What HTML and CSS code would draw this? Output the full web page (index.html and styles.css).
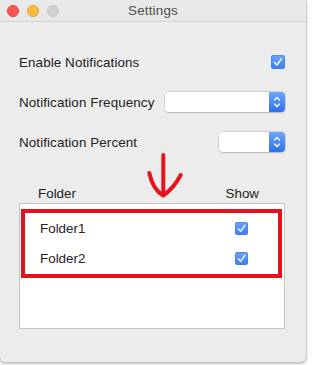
FILE: index.html
```html
<!DOCTYPE html>
<html>
<head>
<meta charset="utf-8">
<link rel="stylesheet" href="styles.css">
</head>
<body>
<div class="window">
  <div class="titlebar">
    <div class="lights">
      <span class="light red"></span>
      <span class="light yellow"></span>
      <span class="light gray"></span>
    </div>
    <div class="title">Settings</div>
  </div>
  <div class="content">
    <div class="row">
      <span class="label">Enable Notifications</span>
      <span class="check"><svg viewBox="0 0 14 14" width="14" height="14"><path d="M3.6 7.4 L6 10 L10.6 3.6" fill="none" stroke="#fff" stroke-width="1.5" stroke-linecap="round" stroke-linejoin="round"/></svg></span>
    </div>
    <div class="row">
      <span class="label">Notification Frequency</span>
      <span class="popup wide"><span class="field"></span><span class="stepper"><svg viewBox="0 0 16 20" width="16" height="20"><path d="M5.5 8 L8 5.5 L10.5 8 M5.5 12 L8 14.5 L10.5 12" fill="none" stroke="#fff" stroke-width="1.3" stroke-linecap="round" stroke-linejoin="round"/></svg></span></span>
    </div>
    <div class="row">
      <span class="label">Notification Percent</span>
      <span class="popup narrow"><span class="field"></span><span class="stepper"><svg viewBox="0 0 16 20" width="16" height="20"><path d="M5.5 8 L8 5.5 L10.5 8 M5.5 12 L8 14.5 L10.5 12" fill="none" stroke="#fff" stroke-width="1.3" stroke-linecap="round" stroke-linejoin="round"/></svg></span></span>
    </div>
    <div class="header">
      <span class="col-folder">Folder</span>
      <span class="col-show">Show</span>
    </div>
    <div class="table">
      <div class="highlight">
        <div class="trow">
          <span class="name">Folder1</span>
          <span class="check small"><svg viewBox="0 0 14 14" width="13" height="13"><path d="M3.6 7.4 L6 10 L10.6 3.6" fill="none" stroke="#fff" stroke-width="1.5" stroke-linecap="round" stroke-linejoin="round"/></svg></span>
        </div>
        <div class="trow">
          <span class="name">Folder2</span>
          <span class="check small"><svg viewBox="0 0 14 14" width="13" height="13"><path d="M3.6 7.4 L6 10 L10.6 3.6" fill="none" stroke="#fff" stroke-width="1.5" stroke-linecap="round" stroke-linejoin="round"/></svg></span>
        </div>
      </div>
    </div>
  </div>
  <svg class="arrow" viewBox="0 0 50 52" width="50" height="52">
    <path d="M23.3 5 L23.3 44" fill="none" stroke="#e8121c" stroke-width="4" stroke-linecap="round"/>
    <path d="M9.3 23 Q13 40 23.3 45.5 Q34 38 40.7 25" fill="none" stroke="#e8121c" stroke-width="4" stroke-linecap="round" stroke-linejoin="round"/>
  </svg>
</div>
</body>
</html>
```

FILE: styles.css
```css
html, body {
  margin: 0;
  padding: 0;
  background: #ffffff;
}
body {
  font-family: "Liberation Sans", Arial, sans-serif;
  width: 308px;
  height: 365px;
  overflow: hidden;
}
.window {
  position: relative;
  width: 306px;
  height: 362px;
  background: #ececec;
  border-radius: 0 0 5px 5px;
  box-shadow: 0 0 0 0.5px #b8b8b8, 0 2px 4px rgba(0,0,0,0.25);
  box-sizing: border-box;
}
.titlebar {
  height: 22px;
  box-sizing: border-box;
  border-bottom: 1px solid #d3d3d3;
  background: #e9e9e9;
  display: flex;
  align-items: center;
  position: relative;
}
.lights {
  display: flex;
  gap: 8px;
  padding-left: 7px;
}
.light {
  width: 12px;
  height: 12px;
  border-radius: 50%;
  box-sizing: border-box;
}
.light.red { background: #fc5753; border: 0.5px solid #df3d39; }
.light.yellow { background: #fdbc40; border: 0.5px solid #dea236; }
.light.gray { background: #d0d0d0; border: 0.5px solid #c2c2c2; }
.title {
  position: absolute;
  left: 0;
  right: 0;
  text-align: center;
  font-size: 13.4px;
  color: #4d4d4d;
  letter-spacing: 0.2px;
}
.content {
  padding: 30px 21px 0 19px;
}
.row {
  height: 20px;
  display: flex;
  align-items: center;
  justify-content: space-between;
  margin-bottom: 20px;
}
.label {
  font-size: 13.4px;
  color: #222;
  letter-spacing: 0.1px;
}
.check {
  width: 14px;
  height: 14px;
  border-radius: 3px;
  background: linear-gradient(#6aa4fa, #3c7ff3);
  box-shadow: inset 0 0 0 0.5px #3a78e0;
  display: flex;
  align-items: center;
  justify-content: center;
}
.check.small {
  width: 13px;
  height: 13px;
}
.popup {
  height: 20px;
  display: flex;
  box-sizing: border-box;
  border-radius: 4px;
  box-shadow: 0 0 0 0.5px #bdbdbd, 0 0.5px 1px rgba(0,0,0,0.2);
  overflow: hidden;
}
.popup.wide { width: 120px; }
.popup.narrow { width: 66px; }
.field {
  flex: 1;
  background: #ffffff;
}
.stepper {
  width: 16px;
  background: linear-gradient(#6aa8fc, #2f70ee);
  display: flex;
  align-items: center;
  justify-content: center;
}
.header {
  margin-top: 32px;
  height: 18px;
  display: flex;
  align-items: center;
  justify-content: space-between;
  padding: 0 26px 0 19px;
  font-size: 13.4px;
  color: #222;
}
.table {
  margin-top: 1px;
  height: 126px;
  box-sizing: border-box;
  background: #ffffff;
  border: 1px solid #c6c6c6;
  padding: 5px 2px 0 1px;
}
.highlight {
  border: 4px solid #e8101c;
  height: 69px;
  box-sizing: border-box;
}
.trow {
  height: 30px;
  display: flex;
  align-items: center;
  justify-content: space-between;
  padding: 0 30px 0 15px;
}
.name {
  font-size: 13.4px;
  color: #222;
}
.arrow {
  position: absolute;
  left: 140px;
  top: 150px;
}
```
